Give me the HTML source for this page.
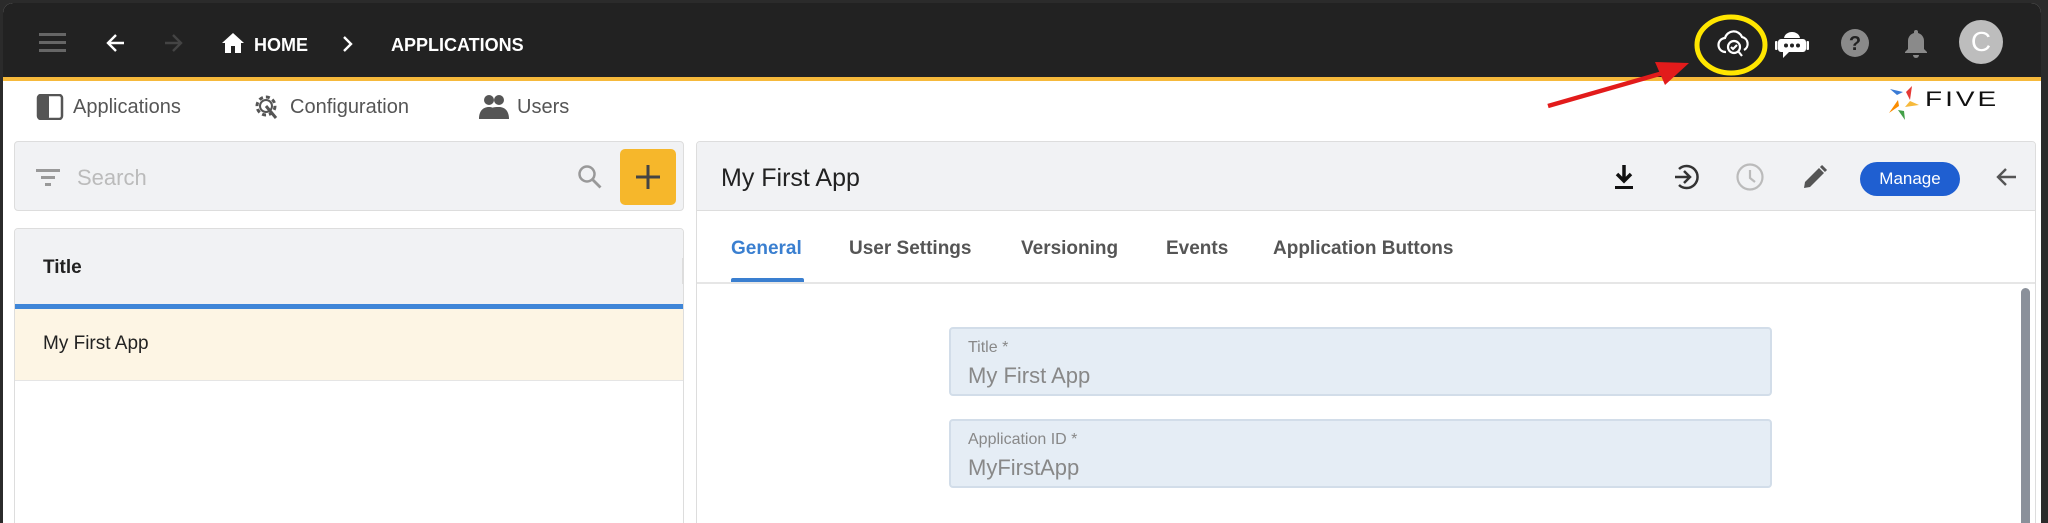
<!DOCTYPE html>
<html><head><meta charset="utf-8"><style>
*{box-sizing:border-box;margin:0;padding:0}
body{width:2048px;height:518px;background:#2b2b2b;font-family:"Liberation Sans",sans-serif;overflow:hidden;position:relative}
.a{position:absolute}
#app{position:absolute;left:3px;top:3px;width:2038px;height:520px;background:#fff;border-radius:10px 10px 0 0;overflow:hidden}
#top{position:absolute;left:0;top:0;width:100%;height:78px;background:#222;border-bottom:4px solid #f6b93b}
.tt{color:#fff;font-weight:bold;font-size:18px;top:32px}
.nav{color:#555;font-size:20px;top:93px}
.tab{font-size:19px;font-weight:bold;color:#555;top:236px}
.field{position:absolute;left:946px;width:823px;height:69px;background:#e5edf5;border:2px solid #d2dde9;border-radius:4px}
.field .l{position:absolute;left:17px;top:10px;font-size:16px;color:#888}
.field .v{position:absolute;left:17px;top:34px;font-size:22px;color:#888}
</style></head><body>
<div id="app">
<div id="top">
 <svg class="a" style="left:36px;top:30px" width="28" height="20"><g fill="#666"><rect y="0" width="27" height="3"/><rect y="8" width="27" height="3"/><rect y="16" width="27" height="3"/></g></svg>
 <svg class="a" style="left:100px;top:28px" width="26" height="24" viewBox="0 0 24 24"><path d="M20 12H5M12 4l-8 8 8 8" stroke="#fff" stroke-width="2.4" fill="none"/></svg>
 <svg class="a" style="left:157px;top:28px" width="26" height="24" viewBox="0 0 24 24"><path d="M4 12h15M12 4l8 8-8 8" stroke="#444" stroke-width="2.4" fill="none"/></svg>
 <svg class="a" style="left:218px;top:29px" width="24" height="22" viewBox="0 0 24 22"><path d="M12 1L1 11h3v10h6v-7h4v7h6V11h3z" fill="#fff"/></svg>
 <div class="a tt" style="left:251px">HOME</div>
 <svg class="a" style="left:339px;top:33px" width="12" height="16"><path d="M2 1l7 7-7 7" stroke="#fff" stroke-width="2.4" fill="none"/></svg>
 <div class="a tt" style="left:388px">APPLICATIONS</div>
 <svg class="a" style="left:1714px;top:24px" width="34" height="34" viewBox="0 0 34 34"><path d="M9 25a7 7 0 0 1-1-14 9 9 0 0 1 17-1 7 7 0 0 1 2 13" stroke="#fff" stroke-width="2.2" fill="none"/><circle cx="17" cy="20" r="6" stroke="#fff" stroke-width="2.2" fill="#222"/><path d="M14 20l2 2 4-4M21 24l4 5" stroke="#fff" stroke-width="2.2" fill="none"/></svg>
 <svg class="a" style="left:1688px;top:10px" width="80" height="64"><ellipse cx="40" cy="32" rx="34" ry="28" stroke="#ffe600" stroke-width="5" fill="none"/></svg>
 <svg class="a" style="left:1772px;top:27px" width="34" height="30" viewBox="0 0 34 30"><path d="M17 2a8 7 0 0 1 8 6H9a8 7 0 0 1 8-6z" fill="#fff"/><path d="M6 9h22a3 3 0 0 1 3 3v7a3 3 0 0 1-3 3H14l-6 6v-6H6a3 3 0 0 1-3-3v-7a3 3 0 0 1 3-3z" fill="#fff"/><rect x="0" y="11" width="2.5" height="9" rx="1" fill="#fff"/><rect x="31.5" y="11" width="2.5" height="9" rx="1" fill="#fff"/><circle cx="11" cy="15.5" r="2" fill="#222"/><circle cx="17" cy="15.5" r="2" fill="#222"/><circle cx="23" cy="15.5" r="2" fill="#222"/></svg>
 <svg class="a" style="left:1837px;top:25px" width="30" height="30" viewBox="0 0 30 30"><circle cx="15" cy="15" r="14" fill="#8a8a8a"/><text x="15" y="22" text-anchor="middle" font-family="Liberation Sans" font-weight="bold" font-size="20" fill="#222">?</text></svg>
 <svg class="a" style="left:1900px;top:25px" width="26" height="30" viewBox="0 0 26 30"><path d="M13 2a2 2 0 0 1 2 2v1a8 8 0 0 1 6 8v8l3 3v1H2v-1l3-3v-8a8 8 0 0 1 6-8V4a2 2 0 0 1 2-2z" fill="#8a8a8a"/><path d="M10 27h6a3 3 0 0 1-6 0" fill="#8a8a8a"/></svg>
 <div class="a" style="left:1956px;top:17px;width:44px;height:44px;border-radius:50%;background:#bdbdbd;color:#fff;font-size:28px;text-align:center;line-height:44px">C</div>
</div>
<svg class="a" style="left:1540px;top:50px" width="160" height="60"><path d="M5 53L120 20" stroke="#e21b1b" stroke-width="4.5"/><path d="M146 10L112 9 122 32z" fill="#e21b1b"/></svg>
<!-- nav row -->
<svg class="a" style="left:33px;top:91px" width="28" height="26"><rect x="2" y="1" width="24" height="24" rx="3" fill="none" stroke="#555" stroke-width="2.5"/><rect x="2" y="1" width="11" height="24" rx="2" fill="#555"/></svg>
<div class="a nav" style="left:70px">Applications</div>
<svg class="a" style="left:249px;top:89px" width="30" height="30" viewBox="0 0 30 30"><circle cx="14" cy="14" r="9" stroke="#555" stroke-width="3" stroke-dasharray="4 3" fill="none"/><circle cx="14" cy="14" r="6" stroke="#555" stroke-width="2" fill="none"/><path d="M14 14l10 12" stroke="#555" stroke-width="3"/></svg>
<div class="a nav" style="left:287px">Configuration</div>
<svg class="a" style="left:476px;top:91px" width="30" height="26" viewBox="0 0 30 26"><circle cx="10" cy="6" r="5" fill="#555"/><circle cx="20" cy="6" r="5" fill="#555"/><path d="M0 25c0-9 5-12 10-12s10 3 10 12z M16 25c0-7-1-9-3-11 2-1 4-1 7-1 5 0 10 3 10 12z" fill="#555"/></svg>
<div class="a nav" style="left:514px">Users</div>
<svg class="a" style="left:1884px;top:82px" width="34" height="36" viewBox="0 0 34 36"><path d="M3 4l13 3-6 3z" fill="#3a7bd5"/><path d="M25 1l-2 14-4-8z" fill="#e53935"/><path d="M32 20l-14 2 5-6z" fill="#f6b93b"/><path d="M18 35l-7-10 6 1z" fill="#43a047"/><path d="M2 28l9-13 1 6z" fill="#fb8c00"/></svg>
<div class="a" style="left:1922px;top:84px;font-size:28px;letter-spacing:3px;color:#111;transform:scaleY(.75);transform-origin:top left">FIVE</div>
<!-- left panel -->
<div class="a" style="left:11px;top:138px;width:670px;height:70px;background:#f1f2f4;border:1.5px solid #ddd;border-radius:4px"></div>
<svg class="a" style="left:33px;top:166px" width="24" height="20"><g fill="#999"><rect width="24" height="3"/><rect x="5" y="7" width="14" height="3"/><rect x="9" y="14" width="6" height="3"/></g></svg>
<div class="a" style="left:74px;top:162px;font-size:22px;color:#bbb">Search</div>
<svg class="a" style="left:574px;top:161px" width="26" height="26" viewBox="0 0 26 26"><circle cx="10" cy="10" r="7.5" stroke="#999" stroke-width="2.5" fill="none"/><path d="M15.5 15.5l8 8" stroke="#999" stroke-width="2.8"/></svg>
<div class="a" style="left:617px;top:146px;width:56px;height:56px;background:#f6b72b;border-radius:5px"></div>
<svg class="a" style="left:632px;top:161px" width="26" height="26"><path d="M13 1v24M1 13h24" stroke="#444" stroke-width="3"/></svg>
<div class="a" style="left:11px;top:225px;width:670px;height:300px;border:1.5px solid #ddd;border-radius:4px;background:#fff;overflow:hidden">
 <div class="a" style="left:0;top:0;width:100%;height:75px;background:#f1f2f4"></div>
 <div class="a" style="left:667px;top:29px;width:2px;height:26px;background:#ddd"></div>
 <div class="a" style="left:28px;top:28px;font-size:19px;font-weight:bold;color:#222">Title</div>
 <div class="a" style="left:0;top:75px;width:100%;height:5px;background:#3f86d8"></div>
 <div class="a" style="left:0;top:80px;width:100%;height:72px;background:#fdf5e4;border-bottom:1.5px solid #e5e5e5"></div>
 <div class="a" style="left:28px;top:104px;font-size:19px;color:#222">My First App</div>
</div>
<!-- right panel -->
<div class="a" style="left:693px;top:138px;width:1340px;height:390px;border:1.5px solid #ddd;border-radius:4px;background:#fff;overflow:hidden">
 <div class="a" style="left:0;top:0;width:100%;height:69px;background:#f1f2f4;border-bottom:1.5px solid #ddd"></div>
 <div class="a" style="left:24px;top:22px;font-size:25px;color:#222">My First App</div>
 <svg class="a" style="left:915px;top:22px" width="24" height="26"><path d="M12 1v15M5 10l7 7 7-7" stroke="#111" stroke-width="3.5" fill="none"/><rect x="3" y="22" width="18" height="3" fill="#111"/></svg>
 <svg class="a" style="left:974px;top:20px" width="30" height="30" viewBox="0 0 30 30"><path d="M8 7a11 11 0 1 1 0 16" stroke="#333" stroke-width="2.5" fill="none"/><path d="M4 15h15M13 9l6 6-6 6" stroke="#333" stroke-width="2.5" fill="none"/></svg>
 <svg class="a" style="left:1038px;top:20px" width="30" height="30" viewBox="0 0 30 30"><circle cx="15" cy="15" r="12.5" stroke="#bbb" stroke-width="2.2" fill="none"/><path d="M15 8v8l5 4" stroke="#bbb" stroke-width="2.2" fill="none"/></svg>
 <svg class="a" style="left:1105px;top:22px" width="26" height="26" viewBox="0 0 26 26"><path d="M2 24l1-6L17 4l5 5L8 23z" fill="#555"/><path d="M19 2l5 5" stroke="#555" stroke-width="3"/></svg>
 <div class="a" style="left:1163px;top:20px;width:100px;height:34px;background:#1f5fd1;border-radius:17px;color:#fff;font-size:17px;text-align:center;line-height:34px">Manage</div>
 <svg class="a" style="left:1297px;top:23px" width="26" height="24" viewBox="0 0 24 24"><path d="M21 12H4M11 4l-8 8 8 8" stroke="#555" stroke-width="2.4" fill="none"/></svg>
 <div class="a" style="left:0;top:140px;width:100%;height:2px;background:#e6e6e6"></div>
 <div class="a tab" style="left:34px;top:96px;color:#3a7fd0">General</div>
 <div class="a tab" style="left:152px;top:96px">User Settings</div>
 <div class="a tab" style="left:324px;top:96px">Versioning</div>
 <div class="a tab" style="left:469px;top:96px">Events</div>
 <div class="a tab" style="left:576px;top:96px">Application Buttons</div>
 <div class="a" style="left:34px;top:136px;width:73px;height:4px;background:#3a7fd0;border-radius:2px 2px 0 0"></div>
 <div class="a" style="left:1324px;top:146px;width:9px;height:250px;background:#8a909a;border-radius:5px"></div>
</div>
<div class="field" style="top:324px"><div class="l">Title *</div><div class="v">My First App</div></div>
<div class="field" style="top:416px"><div class="l">Application ID *</div><div class="v">MyFirstApp</div></div>
</div>
</body></html>
